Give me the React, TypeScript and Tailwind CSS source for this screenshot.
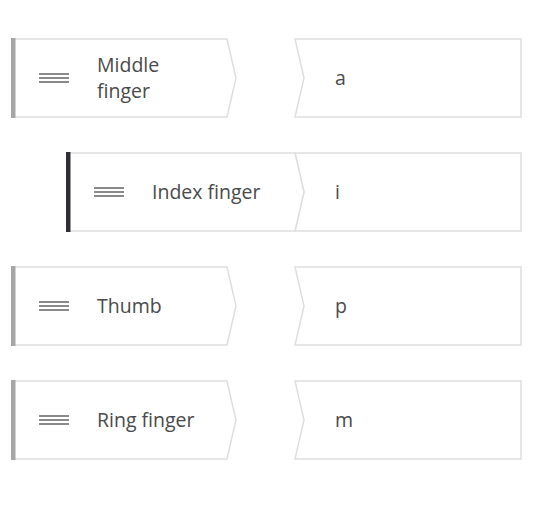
import React from "react";

type Pair = { term: string; match: string; active?: boolean };

const pairs: Pair[] = [
  { term: "Middle finger", match: "a" },
  { term: "Index finger", match: "i", active: true },
  { term: "Thumb", match: "p" },
  { term: "Ring finger", match: "m" },
];

function Handle() {
  return (
    <div className="flex w-[30px] flex-col gap-[2.5px]">
      <span className="h-[1.5px] bg-[#8a8a8a]" />
      <span className="h-[1.5px] bg-[#8a8a8a]" />
      <span className="h-[1.5px] bg-[#8a8a8a]" />
    </div>
  );
}

function TermCard({ text, active }: { text: string; active?: boolean }) {
  const w = active ? 239 : 226;
  const body = w - 10;
  return (
    <div className={`relative h-[80px] ${active ? "ml-[55px] w-[239px]" : "w-[226px]"}`}>
      <svg className="absolute inset-0" width={w} height={80} viewBox={`0 0 ${w} 80`}>
        <polygon
          points={`1,1 ${body},1 ${w - 1},40 ${body},79 1,79`}
          fill="#fff"
          stroke="#dedede"
          strokeWidth="1.5"
        />
        <rect x="0" y="0" width="4.5" height="80" fill={active ? "#2d2f33" : "#a6a6a6"} />
      </svg>
      <div className="relative flex h-full items-center pl-[28px] pr-[20px]">
        <Handle />
        <span className="ml-[28px] flex-1 text-[19.5px] leading-[26px] text-[#4a4a4a]">{text}</span>
      </div>
    </div>
  );
}

function MatchCard({ text }: { text: string }) {
  return (
    <div className="relative h-[80px] w-[228px]">
      <svg className="absolute inset-0" width={228} height={80} viewBox="0 0 228 80">
        <polygon points="1,1 227,1 227,79 1,79 10,40" fill="#fff" stroke="#dedede" strokeWidth="1.5" />
      </svg>
      <div className="relative flex h-full items-center pl-[41px] text-[19.5px] text-[#4a4a4a]">{text}</div>
    </div>
  );
}

export default function App() {
  return (
    <div
      className="min-h-[516px] w-[539px] bg-white pl-[11px] pt-[38px]"
      style={{ fontFamily: '"Open Sans", sans-serif' }}
    >
      <div className="flex flex-col gap-[34px]">
        {pairs.map((p) => (
          <div key={p.term} className="relative flex">
            <div className="w-[283px] shrink-0" />
            <MatchCard text={p.match} />
            <div className="absolute left-0 top-0">
              <TermCard text={p.term} active={p.active} />
            </div>
          </div>
        ))}
      </div>
    </div>
  );
}
